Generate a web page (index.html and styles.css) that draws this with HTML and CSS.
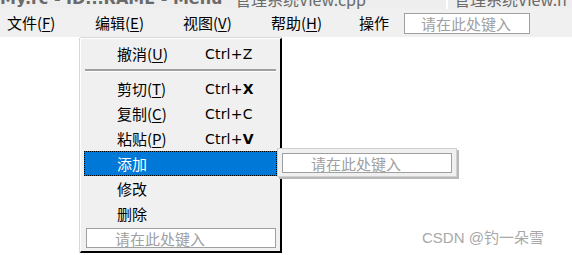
FILE: index.html
```html
<!DOCTYPE html>
<html>
<head>
<meta charset="utf-8">
<link rel="stylesheet" href="styles.css">
</head>
<body>
<div class="tabs">
  <div class="tab tab-active"><span class="tab-text">My.rc - ID...RAME - Menu</span><span class="tab-ctl">▾ ✕</span></div>
  <div class="tab tab-2"><span class="tab-text">管理系统View.cpp</span></div>
  <div class="tab tab-3"><span class="tab-text">管理系统View.h</span></div>
</div>
<div class="menubar">
  <div class="mb-item">文件(<u>F</u>)</div>
  <div class="mb-item">编辑(<u>E</u>)</div>
  <div class="mb-item">视图(<u>V</u>)</div>
  <div class="mb-item">帮助(<u>H</u>)</div>
  <div class="mb-item mb-last">操作</div>
  <div class="typebox typebox-bar">请在此处键入</div>
</div>
<div class="canvas">
  <div class="dropdown">
    <div class="row"><span class="label">撤消(<u>U</u>)</span><span class="key">Ctrl+Z</span></div>
    <div class="sep"></div>
    <div class="row"><span class="label">剪切(<u>T</u>)</span><span class="key">Ctrl+<b>X</b></span></div>
    <div class="row"><span class="label">复制(<u>C</u>)</span><span class="key">Ctrl+C</span></div>
    <div class="row"><span class="label">粘贴(<u>P</u>)</span><span class="key">Ctrl+<b>V</b></span></div>
    <div class="row row-sel"><span class="label">添加</span></div>
    <div class="row"><span class="label">修改</span></div>
    <div class="row"><span class="label">删除</span></div>
    <div class="typebox typebox-menu">请在此处键入</div>
  </div>
  <div class="submenu">
    <div class="typebox typebox-sub">请在此处键入</div>
  </div>
  <div class="watermark">CSDN @钓一朵雪</div>
</div>
</body>
</html>
```
FILE: styles.css
```css
* { box-sizing: border-box; }
html, body { margin: 0; padding: 0; }
body {
  width: 572px;
  height: 255px;
  overflow: hidden;
  background: #ffffff;
  font-family: "Noto Sans CJK SC", "DejaVu Sans", sans-serif;
  font-size: 15px;
  color: #000;
  position: relative;
}
u { text-decoration: underline; text-underline-offset: 2px; }

.tabs {
  height: 9px;
  display: flex;
  overflow: hidden;
  background: #eeeeee;
  color: #6a6a6a;
  font-family: "DejaVu Sans", sans-serif;
  font-weight: bold;
  font-size: 16px;
}
.tab { height: 9px; overflow: hidden; white-space: nowrap; }
.tab-text, .tab-ctl {
  display: inline-block;
  line-height: 16px;
  margin-top: -9px;
  vertical-align: top;
  white-space: nowrap;
}
.tab-active { width: 232px; }
.tab-ctl { margin-left: 14px; font-weight: normal; }
.tab-2 { width: 214px; padding-left: 3px; font-family: "Noto Sans CJK SC", sans-serif; font-weight: normal; }
.tab-3 { flex: 1; padding-left: 6px; border-left: 2px solid #ffffff; font-family: "Noto Sans CJK SC", sans-serif; font-weight: normal; }

.menubar {
  height: 28px;
  background: #f0f0f0;
  display: flex;
  align-items: center;
  padding-left: 7px;
}
.mb-item { width: 88px; line-height: 20px; white-space: nowrap; }
.mb-last { width: 45px; }

.typebox {
  background: #ffffff;
  border: 1px solid #a0a0a0;
  color: #a0a0a0;
  height: 21px;
  line-height: 19px;
  white-space: nowrap;
}
.typebox-bar { width: 126px; padding-left: 16px; margin-top: 1px; }

.canvas { position: relative; height: 218px; }

.dropdown {
  position: absolute;
  left: 80px;
  top: 1px;
  width: 202px;
  height: 215px;
  background: #f0f0f0;
  border-left: 1px solid #ffffff;
  border-top: 1px solid #ffffff;
  border-right: 2px solid #000000;
  border-bottom: 2px solid #000000;
  padding: 2px 3px 0 3px;
  box-shadow: -1px 0 0 #d8d8d8, 0 -1px 0 #d8d8d8;
}
.row {
  height: 25px;
  display: flex;
  align-items: center;
  padding-left: 33px;
  white-space: nowrap;
}
.label { width: 88px; }
.key {
  font-family: "DejaVu Sans", sans-serif;
  font-size: 14px;
  letter-spacing: 0.2px;
}
.key b { font-weight: bold; }
.sep {
  height: 10px;
  padding-top: 3px;
  margin: 0 1px 0 1px;
}
.sep::before {
  content: "";
  display: block;
  height: 2px;
  background: #a0a0a0;
  border-bottom: 1px solid #ffffff;
}
.row-sel {
  background: #0078d7;
  color: #ffffff;
  border: 1px dotted #000000;
  padding-left: 32px;
}
.typebox-menu {
  margin-top: 2px;
  margin-left: 2px;
  width: 190px;
  height: 20px;
  padding-left: 28px;
}

.submenu {
  position: absolute;
  left: 277px;
  top: 111px;
  width: 180px;
  height: 29px;
  background: #f0f0f0;
  border: 1px solid #d0d0d0;
  padding: 4px 0 0 4px;
  box-shadow: 2px 2px 0 #b8b8b8;
}
.typebox-sub {
  width: 170px;
  height: 20px;
  padding-left: 28px;
}

.watermark {
  position: absolute;
  left: 422px;
  top: 189px;
  color: #a8a8a8;
  font-size: 15px;
  white-space: nowrap;
  font-family: "Liberation Sans", "Noto Sans CJK SC", sans-serif;
}
```
